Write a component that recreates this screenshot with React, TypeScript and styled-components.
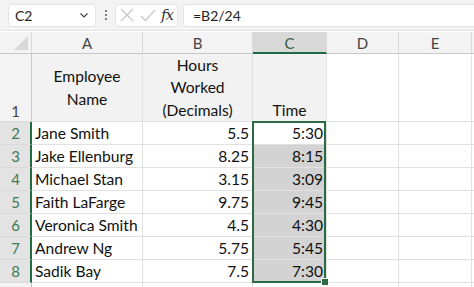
import React from "react";
import styled, { createGlobalStyle } from "styled-components";

const GlobalStyle = createGlobalStyle`
  html, body {
    margin: 0;
    padding: 0;
    background: #ffffff;
    overflow: hidden;
  }
  body {
    font-family: Lato, "Liberation Sans", sans-serif;
  }
`;

const Page = styled.div`
  width: 474px;
  height: 287px;
  overflow: hidden;
  background: #ffffff;
`;

const FormulaBar = styled.div`
  height: 31px;
  background: #f3f3f3;
  border-bottom: 1px solid #e2e2e2;
  display: flex;
  align-items: center;
  padding: 0 0 0 8px;
  box-sizing: border-box;
`;

const Box = styled.div<{ $width?: number; $grow?: boolean }>`
  height: 23px;
  box-sizing: border-box;
  background: #ffffff;
  border: 1px solid #e4e4e4;
  border-radius: 4px;
  display: flex;
  align-items: center;
  width: ${(p) => (p.$width ? `${p.$width}px` : "auto")};
  flex: ${(p) => (p.$grow ? "1" : "none")};
  font-size: 14px;
  color: #222;
`;

const FormulaBox = styled(Box)`
  border-right: none;
  border-top-right-radius: 0;
  border-bottom-right-radius: 0;
`;

const NameText = styled.span`
  flex: 1;
  padding-left: 6px;
`;

const Dots = styled.div`
  width: 19px;
  display: flex;
  flex-direction: column;
  align-items: center;
  gap: 2px;
  span {
    width: 2px;
    height: 2px;
    background: #555;
    border-radius: 1px;
  }
`;

const FxBox = styled(Box)`
  padding: 0 4px 0 2px;
  justify-content: space-between;
  margin-right: 5px;
`;

const Fx = styled.span`
  font-family: "DejaVu Serif", "Liberation Serif", serif;
  font-style: italic;
  font-size: 15px;
  color: #333;
  letter-spacing: -1px;
`;

const FormulaText = styled.span`
  padding-left: 9px;
  font-size: 14px;
  color: #222;
`;

const Grid = styled.div`
  display: grid;
  grid-template-columns: 32px 111px 110px 74px 72px 73px 40px;
  grid-template-rows: 22px 68px repeat(8, 23px);
  margin-top: 1px;
  font-family: Lato, "Liberation Sans", sans-serif;
`;

const Corner = styled.div`
  background: #f3f3f3;
  border-right: 1px solid #dadada;
  border-bottom: 1px solid #c8c8c8;
  display: flex;
  align-items: flex-end;
  justify-content: flex-end;
  padding: 0 3px 3px 0;
  svg {
    display: block;
  }
`;

const ColHead = styled.div<{ $sel?: boolean }>`
  background: ${(p) => (p.$sel ? "#d9d9d9" : "#f3f3f3")};
  border-right: 1px solid #dadada;
  border-bottom: ${(p) => (p.$sel ? "2px solid #1e6b41" : "1px solid #c8c8c8")};
  display: flex;
  align-items: center;
  justify-content: center;
  font-size: 15px;
  color: ${(p) => (p.$sel ? "#3a5a46" : "#444")};
  padding-top: 1px;
`;

const RowHead = styled.div<{ $sel?: boolean; $bottom?: boolean }>`
  background: ${(p) => (p.$sel ? "#e3e3e3" : "#f3f3f3")};
  border-right: ${(p) => (p.$sel ? "2px solid #1e6b41" : "1px solid #c8c8c8")};
  border-bottom: 1px solid #dadada;
  display: flex;
  align-items: ${(p) => (p.$bottom ? "flex-end" : "center")};
  justify-content: center;
  font-size: 15px;
  color: ${(p) => (p.$sel ? "#3f7a55" : "#444")};
  padding-bottom: ${(p) => (p.$bottom ? "1px" : "0")};
  padding-left: ${(p) => (p.$sel ? "1px" : "0")};
`;

const Cell = styled.div<{
  $align?: "left" | "right" | "center";
  $valign?: "center" | "flex-end";
  $bg?: string;
}>`
  position: relative;
  background: ${(p) => p.$bg || "#ffffff"};
  border-right: 1px solid #e1e1e1;
  border-bottom: 1px solid #e1e1e1;
  display: flex;
  flex-direction: column;
  justify-content: ${(p) => p.$valign || "flex-end"};
  align-items: ${(p) =>
    p.$align === "right" ? "flex-end" : p.$align === "center" ? "center" : "flex-start"};
  text-align: ${(p) => p.$align || "left"};
  padding: 0 3px 0 3px;
  font-size: 15.6px;
  line-height: 22.5px;
  color: #111;
  white-space: nowrap;
`;

const Selection = styled.div<{ $rows: number }>`
  position: absolute;
  left: -1px;
  top: -1px;
  width: 74px;
  height: ${(p) => p.$rows * 23 + 1}px;
  box-sizing: border-box;
  border: 2px solid #2b6a45;
  pointer-events: none;
  z-index: 2;
`;

const Handle = styled.span`
  position: absolute;
  right: -5px;
  bottom: -5px;
  width: 6px;
  height: 6px;
  background: #2b6a45;
  border: 1px solid #ffffff;
`;

const rows = [
  ["Jane Smith", "5.5", "5:30"],
  ["Jake Ellenburg", "8.25", "8:15"],
  ["Michael Stan", "3.15", "3:09"],
  ["Faith LaFarge", "9.75", "9:45"],
  ["Veronica Smith", "4.5", "4:30"],
  ["Andrew Ng", "5.75", "5:45"],
  ["Sadik Bay", "7.5", "7:30"],
];

const cols = ["A", "B", "C", "D", "E", ""];

const App: React.FC = () => {
  return (
    <Page>
      <GlobalStyle />
      <FormulaBar>
        <Box $width={88}>
          <NameText>C2</NameText>
          <svg width="12" height="12" viewBox="0 0 12 12" style={{ marginRight: 5 }}>
            <path d="M2.5 4.5 L6 8 L9.5 4.5" fill="none" stroke="#444" strokeWidth="1.2" />
          </svg>
        </Box>
        <Dots>
          <span />
          <span />
          <span />
        </Dots>
        <FxBox $width={63}>
          <svg width="18" height="18" viewBox="0 0 18 18">
            <path d="M3 3 L15 15 M15 3 L3 15" stroke="#c8c8c8" strokeWidth="1.3" />
          </svg>
          <svg width="18" height="18" viewBox="0 0 18 18">
            <path d="M2 10 L6.5 14.5 L16 4" fill="none" stroke="#c8c8c8" strokeWidth="1.3" />
          </svg>
          <Fx>fx</Fx>
        </FxBox>
        <FormulaBox $grow>
          <FormulaText>=B2/24</FormulaText>
        </FormulaBox>
      </FormulaBar>

      <Grid>
        <Corner>
          <svg width="14" height="14" viewBox="0 0 14 14">
            <path d="M14 0 L14 14 L0 14 Z" fill="#d8d8d8" />
          </svg>
        </Corner>
        {cols.map((c) => (
          <ColHead key={c || "x"} $sel={c === "C"}>
            {c}
          </ColHead>
        ))}

        <RowHead $bottom>1</RowHead>
        <Cell $align="center" $valign="center" $bg="#f2f2f2">
          <span>Employee</span>
          <span>Name</span>
        </Cell>
        <Cell $align="center" $valign="center" $bg="#f2f2f2">
          <span>Hours</span>
          <span>Worked</span>
          <span>(Decimals)</span>
        </Cell>
        <Cell $align="center" $valign="flex-end" $bg="#f2f2f2">
          <span>Time</span>
        </Cell>
        <Cell />
        <Cell />
        <Cell />

        {rows.map((r, i) => (
          <React.Fragment key={r[0]}>
            <RowHead $sel>{i + 2}</RowHead>
            <Cell>{r[0]}</Cell>
            <Cell $align="right">{r[1]}</Cell>
            <Cell $align="right" $bg={i === 0 ? "#ffffff" : "#d3d3d3"}>
              {r[2]}
              {i === 0 && (
                <Selection $rows={rows.length}>
                  <Handle />
                </Selection>
              )}
            </Cell>
            <Cell />
            <Cell />
            <Cell />
          </React.Fragment>
        ))}

        <RowHead />
        <Cell />
        <Cell />
        <Cell />
        <Cell />
        <Cell />
        <Cell />
      </Grid>
    </Page>
  );
};

export default App;
